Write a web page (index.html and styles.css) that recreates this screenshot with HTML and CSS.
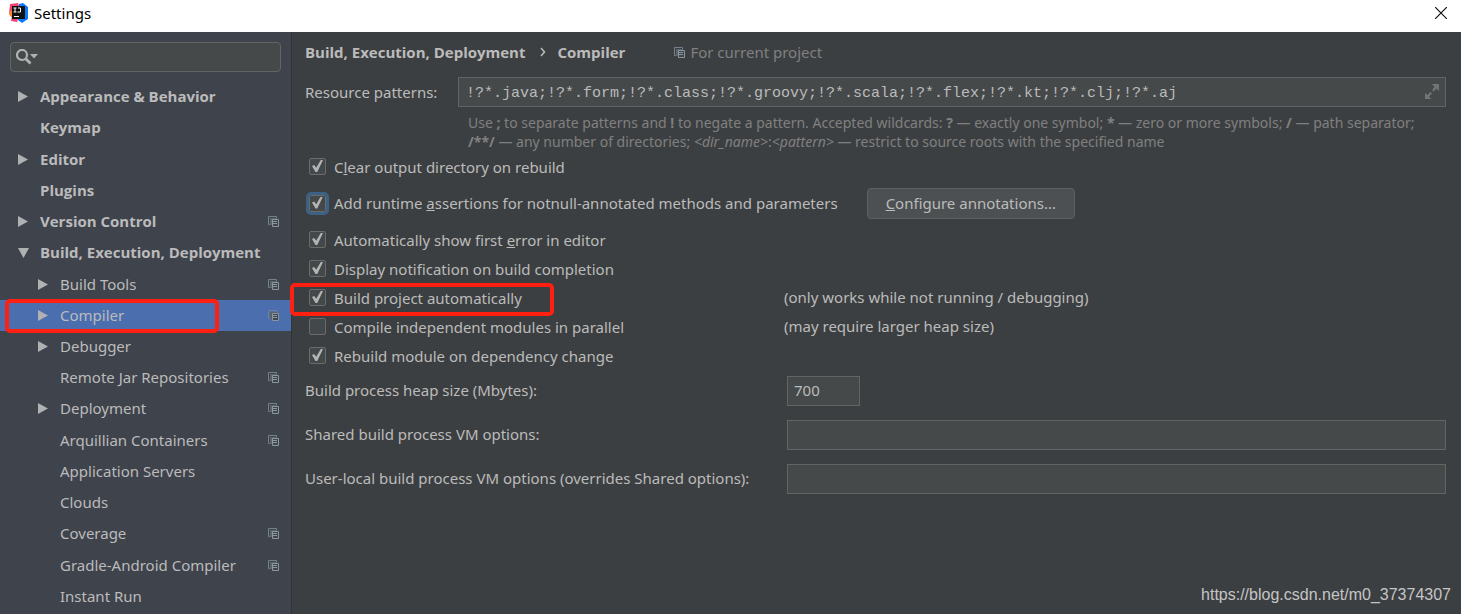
FILE: index.html
```html
<!DOCTYPE html>
<html lang="en">
<head>
<meta charset="utf-8">
<title>Settings</title>
<link rel="stylesheet" href="styles.css">
</head>
<body>
<svg class="defs" width="0" height="0" aria-hidden="true">
  <symbol id="right" viewBox="0 0 11 11"><path d="M0 0L10 5.5L0 11Z" fill="#afb1b3"/></symbol>
  <symbol id="down" viewBox="0 0 11 11"><path d="M0 1H11L5.5 11Z" fill="#afb1b3"/></symbol>
  <symbol id="copy" viewBox="0 0 11 11"><path d="M3 8.500H.5V.5H8.500V3" fill="none" stroke="#74818c"/><path d="M2 2H9V4H4V9H2Z" fill="#59636c"/><path d="M4.500 3.500H10.500V10.500H4.500Z" fill="#3f464d" stroke="#8a979e"/><path d="M5 5.500H9M5 7.500H9" stroke="#8a979e"/></symbol>
</svg>
<header class="titlebar">
  <svg class="logo" width="20" height="20" viewBox="0 0 20 20" aria-hidden="true">
    <path d="M1 1L9 0L12 8L8 19L2 18L3 13L0 11Z" fill="#f1436f"/>
    <path d="M0 9L4 7V15L1 13Z" fill="#f98b2c"/>
    <path d="M10 1L14 0L19 4V16L13 20L9 17Z" fill="#087cfa"/>
    <path d="M3 3H16V16H3Z" fill="#101010"/>
    <path d="M4.500 5H7.500M6 5V9M4.500 9H7.500M9 5H11.500V9H8.500M5 13.500H10" fill="none" stroke="#fff" stroke-width="1"/>
  </svg>
  <h1 class="title">Settings</h1>
  <button class="close" aria-label="Close"><svg width="12" height="12" viewBox="0 0 12 12"><path d="M0 0L12 12M12 0L0 12" stroke="#111" stroke-width="1.200"/></svg></button>
</header>
<div class="window">
  <aside class="sidebar">
    <div class="search">
      <svg width="22" height="16" viewBox="0 0 22 16" aria-hidden="true"><circle cx="6" cy="6" r="5" fill="none" stroke="#afb1b3" stroke-width="2.200"/><path d="M9.500 9.500L14.500 14.500" stroke="#afb1b3" stroke-width="2.800"/><path d="M14 5H22L18 9.500Z" fill="#afb1b3"/></svg>
      <input class="search-input" type="text" aria-label="Search settings">
    </div>
    <nav class="tree">
      <a class="item top" href="#"><svg class="arrow"><use href="#right"/></svg><span>Appearance &amp; Behavior</span></a>
      <a class="item top" href="#"><i class="arrow"></i><span>Keymap</span></a>
      <a class="item top" href="#"><svg class="arrow"><use href="#right"/></svg><span>Editor</span></a>
      <a class="item top" href="#"><i class="arrow"></i><span>Plugins</span></a>
      <a class="item top" href="#"><svg class="arrow"><use href="#right"/></svg><span>Version Control</span><svg class="copy"><use href="#copy"/></svg></a>
      <a class="item top" href="#"><svg class="arrow"><use href="#down"/></svg><span>Build, Execution, Deployment</span></a>
      <a class="item" href="#"><svg class="arrow"><use href="#right"/></svg><span>Build Tools</span><svg class="copy"><use href="#copy"/></svg></a>
      <a class="item selected" href="#"><svg class="arrow"><use href="#right"/></svg><span>Compiler</span><svg class="copy"><use href="#copy"/></svg></a>
      <a class="item" href="#"><svg class="arrow"><use href="#right"/></svg><span>Debugger</span></a>
      <a class="item" href="#"><i class="arrow"></i><span>Remote Jar Repositories</span><svg class="copy"><use href="#copy"/></svg></a>
      <a class="item" href="#"><svg class="arrow"><use href="#right"/></svg><span>Deployment</span><svg class="copy"><use href="#copy"/></svg></a>
      <a class="item" href="#"><i class="arrow"></i><span>Arquillian Containers</span><svg class="copy"><use href="#copy"/></svg></a>
      <a class="item" href="#"><i class="arrow"></i><span>Application Servers</span></a>
      <a class="item" href="#"><i class="arrow"></i><span>Clouds</span></a>
      <a class="item" href="#"><i class="arrow"></i><span>Coverage</span><svg class="copy"><use href="#copy"/></svg></a>
      <a class="item" href="#"><i class="arrow"></i><span>Gradle-Android Compiler</span><svg class="copy"><use href="#copy"/></svg></a>
      <a class="item" href="#"><i class="arrow"></i><span>Instant Run</span></a>
    </nav>
  </aside>
  <main class="content">
    <div class="crumbs">
      <b>Build, Execution, Deployment</b>
      <svg class="chevron" width="6" height="10" viewBox="0 0 6 10" aria-hidden="true"><path d="M1 1L4.500 5L1 9" fill="none" stroke="#bbb" stroke-width="1.500"/></svg>
      <b>Compiler</b>
      <span class="scope"><svg class="copy"><use href="#copy"/></svg>For current project</span>
    </div>
    <div class="patterns">
      <label for="patterns">Resource patterns:</label>
      <div class="field">
        <input class="mono" id="patterns" type="text" value="!?*.java;!?*.form;!?*.class;!?*.groovy;!?*.scala;!?*.flex;!?*.kt;!?*.clj;!?*.aj">
        <button class="expand" aria-label="Expand"><svg width="14" height="16" viewBox="0 0 14 16"><path d="M7 0H14V7L11.500 4.500L8.500 7.500L7 6L9.500 3ZM0 9L2.500 11L5.500 8L7 9.500L4 12.500L6.500 15H0Z" fill="#6e7679"/></svg></button>
      </div>
      <p class="hint">Use <b>;</b> to separate patterns and <b>!</b> to negate a pattern. Accepted wildcards: <b>?</b> — exactly one symbol; <b>*</b> — zero or more symbols; <b>/</b> — path separator;<br><b>/**/</b> — any number of directories; <em>&lt;dir_name&gt;</em>:<em>&lt;pattern&gt;</em> — restrict to source roots with the specified name</p>
    </div>
    <div class="checks">
      <div class="row"><label class="check"><input type="checkbox" checked><span>C<u>l</u>ear output directory on rebuild</span></label></div>
      <div class="row tall"><label class="check"><input class="focused" type="checkbox" checked><span>Add runtime <u>a</u>ssertions for notnull-annotated methods and parameters</span></label><button class="configure"><u>C</u>onfigure annotations...</button></div>
      <div class="row"><label class="check"><input type="checkbox" checked><span>Automatically show first <u>e</u>rror in editor</span></label></div>
      <div class="row"><label class="check"><input type="checkbox" checked><span>Display notification on build completion</span></label></div>
      <div class="row noted marked"><label class="check"><input type="checkbox" checked><span>Build project automatically</span></label><span class="note">(only works while not running / debugging)</span></div>
      <div class="row noted"><label class="check"><input type="checkbox"><span>Compile independent modules in parallel</span></label><span class="note">(may require larger heap size)</span></div>
      <div class="row"><label class="check"><input type="checkbox" checked><span>Rebuild module on dependency change</span></label></div>
    </div>
    <div class="options">
      <label for="heap">Build process heap size (Mbytes):</label><input class="box heap" id="heap" type="text" value="700">
      <label for="shared">Shared build process VM options:</label><input class="box" id="shared" type="text">
      <label for="local">User-local build process VM options (overrides Shared options):</label><input class="box" id="local" type="text">
    </div>
    <footer class="watermark">https://blog.csdn.net/m0_37374307</footer>
  </main>
</div>
</body>
</html>
```
FILE: styles.css
```css
*, *::before, *::after { box-sizing: border-box; }
body {
  margin: 0;
  min-height: 100vh;
  display: flex;
  flex-direction: column;
  font: 15px/20px "Noto Sans", sans-serif;
  color: #bbbbbb;
  background: #3c3f41;
}
input, button { font: inherit; color: inherit; }
.defs { position: absolute; }
.titlebar {
  display: flex;
  align-items: center;
  height: 32px;
  padding: 0 14px 6px 9px;
  background: #fff;
  color: #000;
}
.title { margin: 0 auto 0 5px; font-size: 15px; font-weight: 400; }
.close { display: flex; padding: 0; border: 0; background: none; }
.window { flex: 1; display: grid; grid-template-columns: 292px minmax(0, 1fr); }

.sidebar {
  display: flex;
  flex-direction: column;
  padding: 10px 0 2px;
  background: #3f434c;
  border-right: 1px solid #323437;
}
.search {
  display: flex;
  align-items: center;
  height: 30px;
  margin: 0 10px 9px;
  padding: 0 5px;
  border: 1px solid #646464;
  border-radius: 4px;
  background: #45494a;
}
.search-input { flex: 1; min-width: 0; border: 0; outline: 0; background: none; }
.tree { flex: 1; display: grid; grid-auto-rows: 1fr; }
.item {
  position: relative;
  display: flex;
  align-items: center;
  padding: 0 12px 0 38px;
  color: inherit;
  text-decoration: none;
}
.item.top, .crumbs b { font-family: "Open Sans", "Noto Sans", sans-serif; font-weight: 700; }
.item.top { padding-left: 18px; }
.item span { padding-bottom: 1px; }
.arrow { width: 11px; height: 11px; margin-right: 11px; }
.copy { width: 11px; height: 11px; }
.item .copy { margin-left: auto; }
.selected { background: #4b6eaf; }
.selected::after, .marked::after {
  content: "";
  position: absolute;
  border: 4px solid #ff2012;
  border-radius: 5px;
}
.selected::after { left: 5px; top: -1px; bottom: -2px; width: 214px; }

.content { display: flex; flex-direction: column; padding: 0 15px 9px 13px; }
.crumbs { display: flex; align-items: center; height: 40px; margin-bottom: 5px; }
.chevron { margin: 0 12px 0 14px; }
.scope { display: flex; align-items: center; gap: 5px; margin-left: 49px; color: #808080; }
.patterns { display: grid; grid-template-columns: 153px minmax(0, 1fr); align-items: center; }
.field {
  display: flex;
  align-items: center;
  height: 30px;
  padding: 0 6px 0 7px;
  border: 1px solid #646464;
  background: #45494a;
}
.mono {
  flex: 1;
  min-width: 0;
  padding: 3px 0 0;
  border: 0;
  outline: 0;
  background: none;
  font: 15px/20px "Liberation Mono", monospace;
}
.expand { display: flex; padding: 0; border: 0; background: none; }
.hint { grid-column: 2; margin: 6px 0 1px; padding-left: 10px; font-size: 14px; line-height: 19px; color: #808080; }

.row { position: relative; display: flex; align-items: center; height: 29px; }
.row.tall { height: 44px; }
.check { display: flex; align-items: center; gap: 8px; padding-left: 4px; }
.check input {
  appearance: none;
  width: 17px;
  height: 17px;
  margin: 0;
  border: 1px solid #6b6b6b;
  border-radius: 2px;
  background: #43494a;
}
.check input:checked::before {
  content: "";
  display: block;
  width: 11px;
  height: 12px;
  margin: 1px 2px;
  background: #b4b4b4;
  clip-path: polygon(0 50%, 20% 42%, 38% 65%, 80% 0, 100% 0, 48% 100%, 32% 100%);
}
.check .focused { outline: 3px solid #3d6185; }
.configure {
  height: 31px;
  margin-left: 29px;
  padding: 0 18px;
  border: 1px solid #5e6060;
  border-radius: 4px;
  background: #4c5052;
}
.noted { display: grid; grid-template-columns: 479px 1fr; }
.note { padding-bottom: 2px; }
.marked::after { left: -15px; top: 0; width: 264px; height: 33px; }

.options {
  display: grid;
  grid-template-columns: 482px minmax(0, 1fr);
  align-items: center;
  row-gap: 14px;
  margin-top: 6px;
}
.options label { padding-bottom: 2px; }
.box { width: 100%; height: 30px; padding: 0 6px 2px; border: 1px solid #646464; background: #45494a; }
.heap { width: 73px; }
.watermark {
  margin-top: auto;
  margin-right: -5px;
  text-align: right;
  font: 16px/20px "Liberation Sans", Arial, sans-serif;
  color: #c4c5c6;
}
```
